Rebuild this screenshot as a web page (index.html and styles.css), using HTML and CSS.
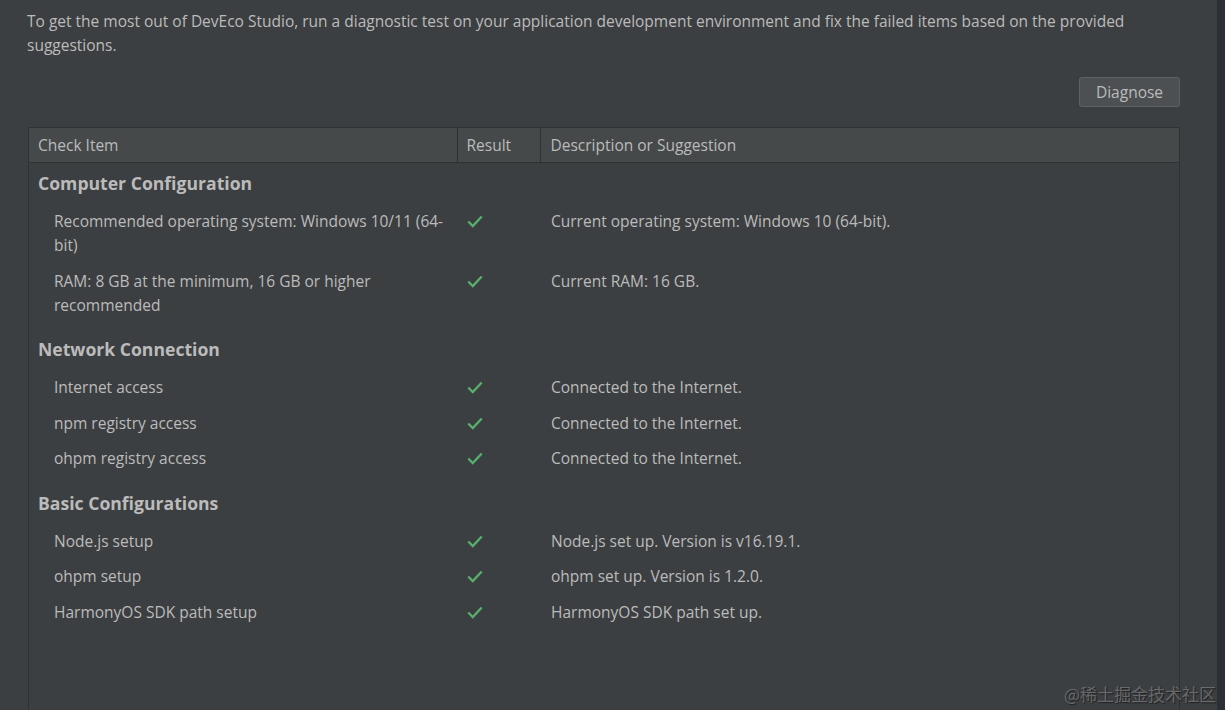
FILE: index.html
```html
<!DOCTYPE html>
<html lang="en">
<head>
<meta charset="utf-8">
<title>Diagnose</title>
<link rel="stylesheet" href="styles.css">
</head>
<body>
<div class="page">
  <main class="main">
    <p class="intro">To get the most out of DevEco Studio, run a diagnostic test on your application development environment and fix the failed items based on the provided suggestions.</p>
    <div class="actions"><button class="btn">Diagnose</button></div>
    <div class="grid">
      <table class="tbl">
        <colgroup><col class="c1"><col class="c2"><col class="c3"></colgroup>
        <thead>
          <tr><th>Check Item</th><th>Result</th><th>Description or Suggestion</th></tr>
        </thead>
        <tbody>
          <tr class="sec first"><td colspan="3">Computer Configuration</td></tr>
          <tr class="item"><td>Recommended operating system: Windows 10/11 (64-bit)</td><td class="res"><svg class="ok" viewBox="0 0 16 16"><polyline points="2,8.5 6,12.5 14,4"/></svg></td><td class="desc">Current operating system: Windows 10 (64-bit).</td></tr>
          <tr class="item"><td>RAM: 8 GB at the minimum, 16 GB or higher recommended</td><td class="res"><svg class="ok" viewBox="0 0 16 16"><polyline points="2,8.5 6,12.5 14,4"/></svg></td><td class="desc">Current RAM: 16 GB.</td></tr>
          <tr class="sec"><td colspan="3">Network Connection</td></tr>
          <tr class="item"><td>Internet access</td><td class="res"><svg class="ok" viewBox="0 0 16 16"><polyline points="2,8.5 6,12.5 14,4"/></svg></td><td class="desc">Connected to the Internet.</td></tr>
          <tr class="item"><td>npm registry access</td><td class="res"><svg class="ok" viewBox="0 0 16 16"><polyline points="2,8.5 6,12.5 14,4"/></svg></td><td class="desc">Connected to the Internet.</td></tr>
          <tr class="item"><td>ohpm registry access</td><td class="res"><svg class="ok" viewBox="0 0 16 16"><polyline points="2,8.5 6,12.5 14,4"/></svg></td><td class="desc">Connected to the Internet.</td></tr>
          <tr class="sec"><td colspan="3">Basic Configurations</td></tr>
          <tr class="item"><td>Node.js setup</td><td class="res"><svg class="ok" viewBox="0 0 16 16"><polyline points="2,8.5 6,12.5 14,4"/></svg></td><td class="desc">Node.js set up. Version is v16.19.1.</td></tr>
          <tr class="item"><td>ohpm setup</td><td class="res"><svg class="ok" viewBox="0 0 16 16"><polyline points="2,8.5 6,12.5 14,4"/></svg></td><td class="desc">ohpm set up. Version is 1.2.0.</td></tr>
          <tr class="item"><td>HarmonyOS SDK path setup</td><td class="res"><svg class="ok" viewBox="0 0 16 16"><polyline points="2,8.5 6,12.5 14,4"/></svg></td><td class="desc">HarmonyOS SDK path set up.</td></tr>
        </tbody>
      </table>
    </div>
  </main>
  <div class="strip"></div>
</div>
<div class="watermark">@稀土掘金技术社区</div>
</body>
</html>
```

FILE: styles.css
```css
html, body {
  margin: 0;
  padding: 0;
  height: 100%;
  overflow: hidden;
}
body {
  background: #3c3f41;
  color: #bbbbbb;
  font-family: "Open Sans", "Noto Sans", sans-serif;
  font-size: 15.5px;
  line-height: 24px;
}
.page {
  display: flex;
  height: 710px;
}
.main {
  flex: 1;
  display: flex;
  flex-direction: column;
  padding: 9px 37px 0 27px;
  min-width: 0;
}
.strip {
  width: 8px;
  background: #2c2f35;
}
.intro {
  margin: 0;
}
.actions {
  display: flex;
  justify-content: flex-end;
  margin-top: 20px;
}
.btn {
  width: 101px;
  height: 30px;
  background: #4c5052;
  border: 1px solid #5e6163;
  border-radius: 3px;
  color: #bbbbbb;
  font-family: inherit;
  font-size: 15.5px;
  padding: 0;
}
.grid {
  flex: 1;
  margin: 20px 0 0 1px;
  border: 1px solid #2f3133;
  border-bottom: none;
}
.tbl {
  width: 100%;
  border-collapse: collapse;
  table-layout: fixed;
}
.c1 { width: 428px; }
.c2 { width: 83px; }
.tbl th {
  background: #45494a;
  font-weight: normal;
  text-align: left;
  height: 34px;
  padding: 0 9px;
  border-bottom: 1px solid #2f3133;
  border-left: 1px solid #2f3133;
}
.tbl th:first-child {
  border-left: none;
}
.tbl th:last-child {
  padding-left: 10px;
}
.tbl td {
  padding: 6px 10px 5.5px 9px;
  vertical-align: top;
}
.sec td {
  font-weight: bold;
  font-size: 17.6px;
  padding: 15px 9px 8px;
}
.sec.first td {
  padding-top: 8px;
}
.item td:first-child {
  padding-left: 25px;
}
.tbl td.desc {
  padding-left: 11px;
}
.ok {
  width: 18px;
  height: 18px;
  margin-top: 3px;
  display: block;
  fill: none;
  stroke: #57b06c;
  stroke-width: 2;
}
.watermark {
  position: absolute;
  right: 9px;
  bottom: 6px;
  font-family: "Noto Sans CJK SC", sans-serif;
  font-size: 17px;
  line-height: 20px;
  color: rgba(150, 152, 155, 0.55);
  text-shadow: 1px 1px 1px rgba(0, 0, 0, 0.5);
}
```
